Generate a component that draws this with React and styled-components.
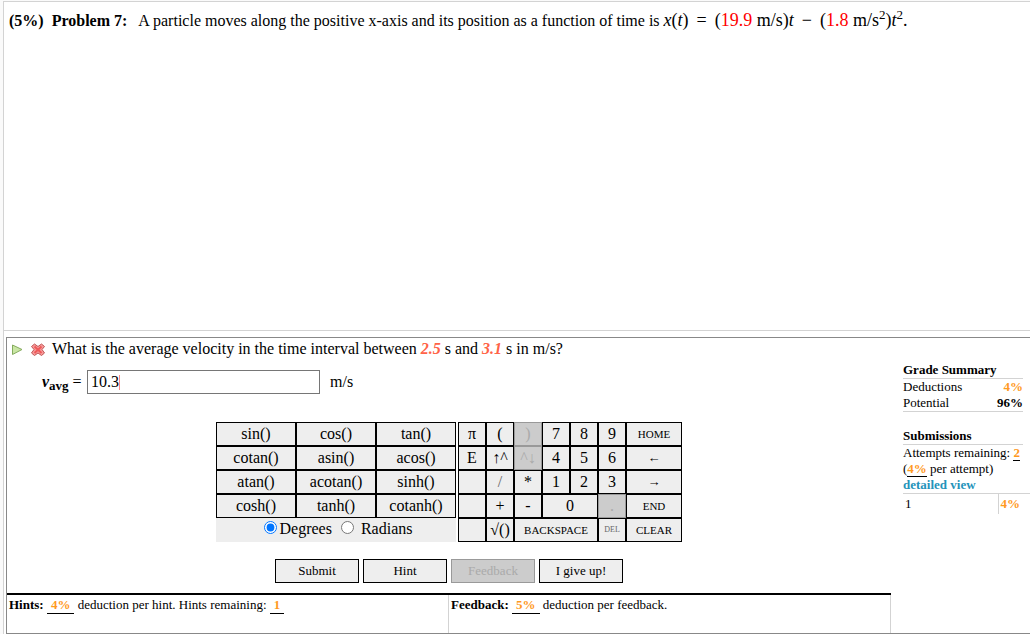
import React, { useState } from 'react'
import styled, { createGlobalStyle } from 'styled-components'

const GlobalStyle = createGlobalStyle`
    * {
        box-sizing: border-box;
    }
    body {
        margin: 0;
        background: #fff;
        color: #000;
        font-family: 'Liberation Serif', 'Times New Roman', serif;
        font-size: 16px;
        overflow: hidden;
    }
    button, input {
        font-family: inherit;
        color: inherit;
    }
`
const Page = styled.div`
    padding: 1px 0 0 3px;
    background: #fafafa;
`
const Assignment = styled.main`
    border: 1px solid #d3d3d3;
    border-right: none;
    border-bottom: none;
    background: #fff;
`
const Statement = styled.section`
    min-height: 329px;
    padding: 6px 5px 0;
    border-bottom: 1px solid #d3d3d3;
`
const StatementText = styled.p`
    display: flex;
    align-items: baseline;
    margin: 0;
    line-height: 24px;
    white-space: pre;
`
const Title = styled.b`
    margin-right: ${props => props.$gap}px;
`
const MathText = styled.span`
    font-size: 18px;
    line-height: 24px;

    sup {
        font-size: 13px;
        line-height: 0;
        vertical-align: 7px;
    }
`
const Red = styled.span`
    color: #f00;
`
const Operator = styled.span`
    margin: 0 8px;
`
const Step = styled.section`
    margin: 6px 0 2px 2px;
    border: 1px solid #888;
    border-right: none;
`
const StepColumns = styled.div`
    display: flex;
`
const Work = styled.form`
    display: flex;
    flex: 1;
    flex-direction: column;
    min-width: 0;
`
const Question = styled.div`
    display: flex;
    align-items: center;
    gap: 7px;
    height: 23px;
    padding-left: 4px;
`
const Icon = styled.svg`
    flex: none;
    width: ${props => props.$size}px;
    height: ${props => props.$size}px;
`
const QuestionText = styled.p`
    margin: 0;
    padding-bottom: 2px;
`
const Value = styled.i`
    color: #ff6347;
    font-weight: bold;
`
const Answer = styled.div`
    display: flex;
    align-items: center;
    height: 24px;
    margin-top: 9px;
    padding-left: 35px;
`
const AnswerLabel = styled.label`
    width: 45px;
    white-space: nowrap;

    sub {
        font-size: 13px;
        font-weight: bold;
        line-height: 0;
        vertical-align: -3px;
    }
`
const AnswerField = styled.span`
    position: relative;
    display: flex;
    margin-right: 10px;

    &:focus-within > span {
        display: none;
    }
`
const AnswerInput = styled.input`
    width: 233px;
    height: 24px;
    padding: 0 3px;
    border: 1px solid #767676;
    outline: none;
    background: #fff;
    font-size: 16px;
    caret-color: #f88;
`
const Caret = styled.span`
    position: absolute;
    top: 5px;
    left: 4px;
    border-right: 1px solid #f88;
    color: transparent;
    line-height: 15px;
    pointer-events: none;
`
const Pad = styled.div`
    display: flex;
    justify-content: center;
    gap: 2px;
    margin-top: 28px;
`
const FunctionKeys = styled.div`
    display: grid;
    grid-template-columns: repeat(3, 80px);
    grid-auto-rows: 24px;
    background: #eee;
`
const NumberKeys = styled.div`
    display: grid;
    grid-template-columns: repeat(6, 28px) 56px;
    grid-auto-rows: 24px;
`
const Key = styled.button`
    grid-column: span ${props => props.$span || 1};
    padding: 0;
    border: 1px solid #000;
    background: #eee;
    color: ${props => props.$faint ? '#666' : '#000'};
    font-size: ${props => props.$size || 16}px;
    line-height: 20px;
    white-space: nowrap;

    &:disabled {
        border-color: #999;
        background: #ccc;
        color: #aaa;
    }
`
const AngleUnit = styled.div`
    display: flex;
    grid-column: 1 / -1;
    align-items: center;
    justify-content: center;
    gap: 9px;
    padding: 0 0 2px 4px;
`
const RadioLabel = styled.label`
    display: flex;
    align-items: center;
    gap: ${props => props.$gap}px;

    input {
        width: 13px;
        height: 13px;
        margin: 0 0 3px;
    }
`
const Actions = styled.div`
    display: flex;
    justify-content: center;
    gap: 4px;
    margin: 17px 0 10px;
`
const ActionButton = styled(Key)`
    width: 84px;
    height: 24px;
`
const Notes = styled.div`
    display: flex;
    height: 40px;
    border-top: 2px solid #000;
    font-size: 13px;
`
const Note = styled.div`
    flex: 1;
    padding: 2px;
    border-right: 1px solid #d3d3d3;
    white-space: nowrap;
`
const Amount = styled.b`
    display: inline-block;
    padding: 0 ${props => props.$pad || 0}px;
    border-bottom: 1px solid #000;
    color: #ff9a1f;
    line-height: ${props => props.$pad ? 16 : 14}px;
`
const Side = styled.aside`
    width: 139px;
    padding: 24px 0 0 12px;
    font-size: 13px;
`
const SideTable = styled.table`
    width: 120px;
    margin-bottom: 16px;
    border-collapse: collapse;
    border-bottom: 1px solid #d3d3d3;

    caption {
        border-bottom: 1px solid #d3d3d3;
        font-weight: bold;
        line-height: 16px;
        text-align: left;
    }
    th, td {
        padding: 0;
        font-weight: normal;
        line-height: 16px;
        text-align: left;
    }
    td {
        text-align: right;
        font-weight: bold;
    }
`
const Orange = styled.span`
    color: #ff9a1f;
`
const SideTitle = styled.h2`
    width: 120px;
    margin: 0;
    border-bottom: 1px solid #d3d3d3;
    font-size: 13px;
    line-height: 16px;
`
const SideText = styled.p`
    margin: 0;
    line-height: 16px;
    white-space: nowrap;
`
const DetailLink = styled.a`
    display: block;
    color: #2493ba;
    font-weight: bold;
    line-height: 16px;
    text-decoration: none;
`
const Attempts = styled.table`
    width: 127px;
    border-collapse: collapse;
    border-top: 1px solid #d3d3d3;

    td {
        padding: 2px;
        line-height: 16px;
    }
    td + td {
        width: 32px;
        border-left: 1px solid #d3d3d3;
        font-weight: bold;
    }
`

const functionKeys = [
    'sin()', 'cos()', 'tan()',
    'cotan()', 'asin()', 'acos()',
    'atan()', 'acotan()', 'sinh()',
    'cosh()', 'tanh()', 'cotanh()'
]

const numberKeys = [
    { text: 'π' }, { text: '(' }, { text: ')', disabled: true },
    { text: '7' }, { text: '8' }, { text: '9' }, { text: 'HOME', size: 11 },
    { text: 'E' }, { text: '↑^' }, { text: '^↓', disabled: true },
    { text: '4' }, { text: '5' }, { text: '6' }, { text: '←', size: 13 },
    { text: '' }, { text: '/', faint: true }, { text: '*' },
    { text: '1' }, { text: '2' }, { text: '3' }, { text: '→', size: 13 },
    { text: '' }, { text: '+' }, { text: '-' },
    { text: '0', span: 2 }, { text: '.', disabled: true }, { text: 'END', size: 11 },
    { text: '' }, { text: '√()' }, { text: 'BACKSPACE', span: 3, size: 11 },
    { text: 'DEL', size: 8, faint: true }, { text: 'CLEAR', size: 11 }
]

const PlayIcon = () => (
    <Icon $size={13} viewBox="0 0 13 13" aria-hidden="true">
        <path d="M1.5 2 L11 6.5 L1.5 11.5 Z" fill="#c9e6a4" stroke="#85ab5e" strokeLinejoin="round" />
    </Icon>
)

const WrongIcon = () => (
    <Icon $size={14} viewBox="0 0 14 14" aria-hidden="true">
        <path
            d="M3.5 1 L7 3.5 L10.5 1 L13.5 3.5 L11 6.5 L13.5 10 L10.5 12.5 L7 10 L3.5 12.5 L0.5 10 L3 6.5 L0.5 3.5 Z"
            fill="#f79a9a" stroke="#c05555" strokeLinejoin="round"
        />
        <path d="M3.5 3.5 L10.5 10 M10.5 3.5 L3.5 10" stroke="#ee5a5a" strokeWidth="2" />
    </Icon>
)

export default function App() {
    const [answer, setAnswer] = useState('10.3')
    const [unit, setUnit] = useState('degrees')

    const addToAnswer = (text) => {
        setAnswer(answer + text)
    }

    const showFunctionKeys = functionKeys.map((text) => {
        return <Key type="button" key={text} onClick={() => addToAnswer(text)}>{text}</Key>
    })

    const showNumberKeys = numberKeys.map((item, index) => {
        return (
            <Key
                type="button"
                key={index}
                $span={item.span}
                $size={item.size}
                $faint={item.faint}
                disabled={item.disabled}
            >
                {item.text}
            </Key>
        )
    })

    return (
        <Page>
            <GlobalStyle />
            <Assignment>
                <Statement>
                    <StatementText>
                        <Title $gap={8}>(5%)</Title>
                        <Title $gap={11}>Problem 7:</Title>
                        <span>A particle moves along the positive x-axis and its position as a function of time is </span>
                        <MathText>
                            <i>x</i>(<i>t</i>)<Operator>=</Operator>(<Red>19.9</Red> m/s)<i>t</i>
                            <Operator>−</Operator>(<Red>1.8</Red> m/s<sup>2</sup>)<i>t</i><sup>2</sup>.
                        </MathText>
                    </StatementText>
                </Statement>
                <Step>
                    <StepColumns>
                        <Work onSubmit={(event) => event.preventDefault()}>
                            <Question>
                                <PlayIcon />
                                <WrongIcon />
                                <QuestionText>
                                    What is the average velocity in the time interval between <Value>2.5</Value> s and <Value>3.1</Value> s in m/s?
                                </QuestionText>
                            </Question>
                            <Answer>
                                <AnswerLabel htmlFor="answer"><b><i>v</i></b><sub>avg</sub> =</AnswerLabel>
                                <AnswerField>
                                    <AnswerInput id="answer" value={answer} onChange={(event) => setAnswer(event.target.value)} />
                                    <Caret aria-hidden="true">{answer}</Caret>
                                </AnswerField>
                                m/s
                            </Answer>
                            <Pad>
                                <FunctionKeys>
                                    {showFunctionKeys}
                                    <AngleUnit>
                                        <RadioLabel $gap={3}>
                                            <input type="radio" name="unit" checked={unit === 'degrees'} onChange={() => setUnit('degrees')} />
                                            Degrees
                                        </RadioLabel>
                                        <RadioLabel $gap={7}>
                                            <input type="radio" name="unit" checked={unit === 'radians'} onChange={() => setUnit('radians')} />
                                            Radians
                                        </RadioLabel>
                                    </AngleUnit>
                                </FunctionKeys>
                                <NumberKeys>{showNumberKeys}</NumberKeys>
                            </Pad>
                            <Actions>
                                <ActionButton type="submit" $size={13}>Submit</ActionButton>
                                <ActionButton type="button" $size={13}>Hint</ActionButton>
                                <ActionButton type="button" $size={13} disabled>Feedback</ActionButton>
                                <ActionButton type="button" $size={13}>I give up!</ActionButton>
                            </Actions>
                            <Notes>
                                <Note>
                                    <b>Hints:</b> <Amount $pad={4}>4%</Amount>{' '}
                                    deduction per hint. Hints remaining: <Amount $pad={4}>1</Amount>
                                </Note>
                                <Note>
                                    <b>Feedback:</b> <Amount $pad={4}>5%</Amount>{' '}
                                    deduction per feedback.
                                </Note>
                            </Notes>
                        </Work>
                        <Side>
                            <SideTable>
                                <caption>Grade Summary</caption>
                                <tbody>
                                    <tr><th scope="row">Deductions</th><td><Orange>4%</Orange></td></tr>
                                    <tr><th scope="row">Potential</th><td>96%</td></tr>
                                </tbody>
                            </SideTable>
                            <SideTitle>Submissions</SideTitle>
                            <SideText>Attempts remaining: <Amount>2</Amount></SideText>
                            <SideText>(<Amount>4%</Amount> per attempt)</SideText>
                            <DetailLink href="#details">detailed view</DetailLink>
                            <Attempts>
                                <tbody>
                                    <tr><td>1</td><td><Orange>4%</Orange></td></tr>
                                </tbody>
                            </Attempts>
                        </Side>
                    </StepColumns>
                </Step>
            </Assignment>
        </Page>
    )
}
